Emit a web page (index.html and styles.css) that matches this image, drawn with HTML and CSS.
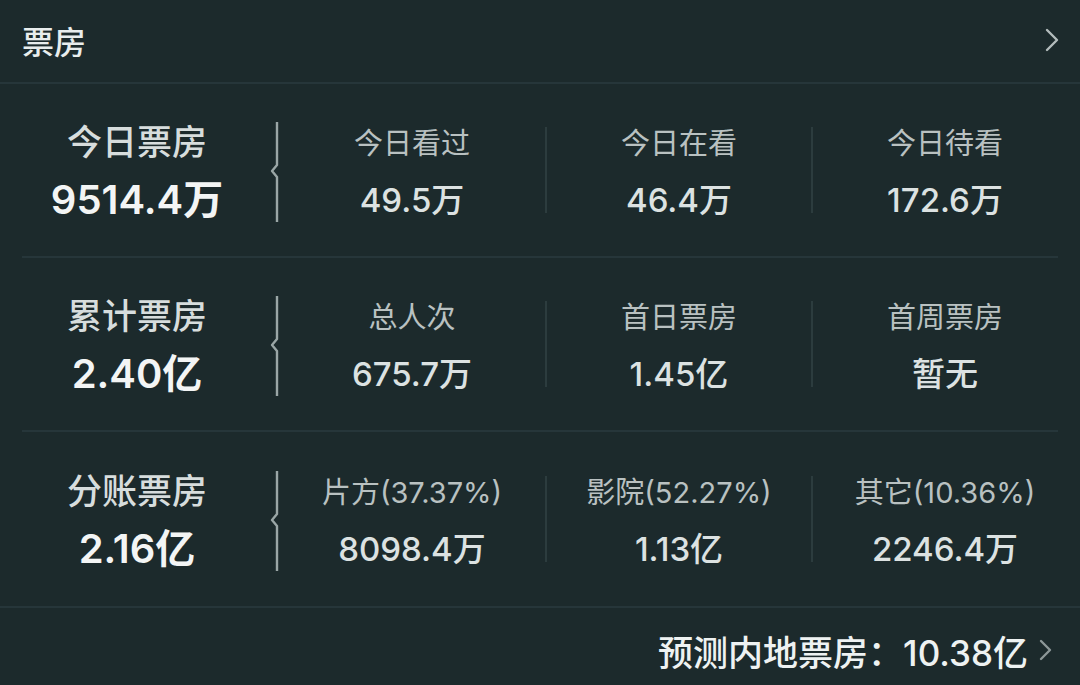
FILE: index.html
```html
<!DOCTYPE html>
<html lang="zh-CN">
<head>
  <meta charset="UTF-8"/>
  <meta name="viewport" content="width=device-width, initial-scale=1.0"/>
  <title>票房</title>
  <link rel="stylesheet" href="styles.css">
</head>
<body>

  <header class="box-head">
    <h1>票房</h1>
    <svg class="arrow" width="16" height="26" viewBox="0 0 16 26">
      <polyline points="3,3 13,13 3,23" />
    </svg>
  </header>

  <div class="stats">

    <div class="stat-row">
      <div class="main">
        <p class="main-label">今日票房</p>
        <p class="main-value">9514.4万</p>
      </div>
      <svg class="brace" width="27" height="102" viewBox="0 0 27 102">
        <polyline points="25,1 25,44 20,50 25,56 25,101" />
      </svg>
      <div class="cols">
        <div class="col">
          <p class="col-label">今日看过</p>
          <p class="col-value">49.5万</p>
        </div>
        <div class="col">
          <p class="col-label">今日在看</p>
          <p class="col-value">46.4万</p>
        </div>
        <div class="col">
          <p class="col-label">今日待看</p>
          <p class="col-value">172.6万</p>
        </div>
      </div>
    </div>

    <div class="stat-row">
      <div class="main">
        <p class="main-label">累计票房</p>
        <p class="main-value">2.40亿</p>
      </div>
      <svg class="brace" width="27" height="102" viewBox="0 0 27 102">
        <polyline points="25,1 25,44 20,50 25,56 25,101" />
      </svg>
      <div class="cols">
        <div class="col">
          <p class="col-label">总人次</p>
          <p class="col-value">675.7万</p>
        </div>
        <div class="col">
          <p class="col-label">首日票房</p>
          <p class="col-value">1.45亿</p>
        </div>
        <div class="col">
          <p class="col-label">首周票房</p>
          <p class="col-value">暂无</p>
        </div>
      </div>
    </div>

    <div class="stat-row">
      <div class="main">
        <p class="main-label">分账票房</p>
        <p class="main-value">2.16亿</p>
      </div>
      <svg class="brace" width="27" height="102" viewBox="0 0 27 102">
        <polyline points="25,1 25,44 20,50 25,56 25,101" />
      </svg>
      <div class="cols">
        <div class="col">
          <p class="col-label">片方(37.37%)</p>
          <p class="col-value">8098.4万</p>
        </div>
        <div class="col">
          <p class="col-label">影院(52.27%)</p>
          <p class="col-value">1.13亿</p>
        </div>
        <div class="col">
          <p class="col-label">其它(10.36%)</p>
          <p class="col-value">2246.4万</p>
        </div>
      </div>
    </div>

  </div>

  <footer class="box-foot">
    <span>预测内地票房：10.38亿</span>
    <svg class="arrow small" width="16" height="24" viewBox="0 0 16 24">
      <polyline points="3,3 12,12 3,21" />
    </svg>
  </footer>

</body>
</html>
```

FILE: styles.css
```css
* {
  margin: 0; padding: 0;
  box-sizing: border-box;
}

body {
  background: #1c2a2c;
  color: #e4e9e9;
  font-family: Inter, "Noto Sans CJK SC", sans-serif;
  width: 1080px;
  height: 685px;
  overflow: hidden;
}

/* top bar */
.box-head {
  display: flex;
  justify-content: space-between;
  align-items: center;
  height: 84px;
  padding: 0 20px 2px 22px;
  border-bottom: 2px solid #26363a;
}

.box-head h1 {
  font-size: 32px;
  font-weight: 500;
  color: #e8eded;
}

.arrow polyline {
  fill: none;
  stroke: #b3bcbc;
  stroke-width: 2.4;
  stroke-linecap: round;
  stroke-linejoin: round;
}

.arrow.small polyline {
  stroke: #8c9797;
}

/* stat rows */
.stats {
  margin: 0 22px;
}

.stat-row {
  display: flex;
  align-items: center;
  height: 174px;
  border-bottom: 2px solid #26363a;
}

.stat-row:last-child {
  border-bottom: none;
}

.main {
  width: 230px;
  flex-shrink: 0;
  display: flex;
  flex-direction: column;
  align-items: center;
  gap: 14px;
  padding-top: 6px;
}

.main-label {
  font-size: 35px;
  line-height: 40px;
  font-weight: 500;
  color: #d7dddd;
}

.main-value {
  font-size: 40px;
  line-height: 48px;
  font-weight: 600;
  color: #f3f5f5;
}

.brace {
  flex-shrink: 0;
  margin-top: 4px;
}

.brace polyline {
  fill: none;
  stroke: #9aa6a6;
  stroke-width: 2.4;
  stroke-linejoin: round;
}

.cols {
  display: flex;
  flex-shrink: 0;
}

.col {
  width: 266px;
  height: 86px;
  flex-shrink: 0;
  display: flex;
  flex-direction: column;
  align-items: center;
  justify-content: center;
  gap: 19px;
  padding-top: 7px;
}

.col + .col {
  border-left: 2px solid #2c3c3e;
}

.col-label {
  font-size: 29px;
  line-height: 34px;
  color: #b9c1c1;
}

.col-value {
  font-size: 33px;
  line-height: 40px;
  font-weight: 500;
  color: #dce2e2;
}

/* forecast line */
.box-foot {
  display: flex;
  justify-content: flex-end;
  align-items: center;
  gap: 10px;
  height: 82px;
  padding: 4px 26px 0 0;
  border-top: 2px solid #26363a;
  font-size: 35px;
  font-weight: 500;
  color: #eef2f2;
}
```
